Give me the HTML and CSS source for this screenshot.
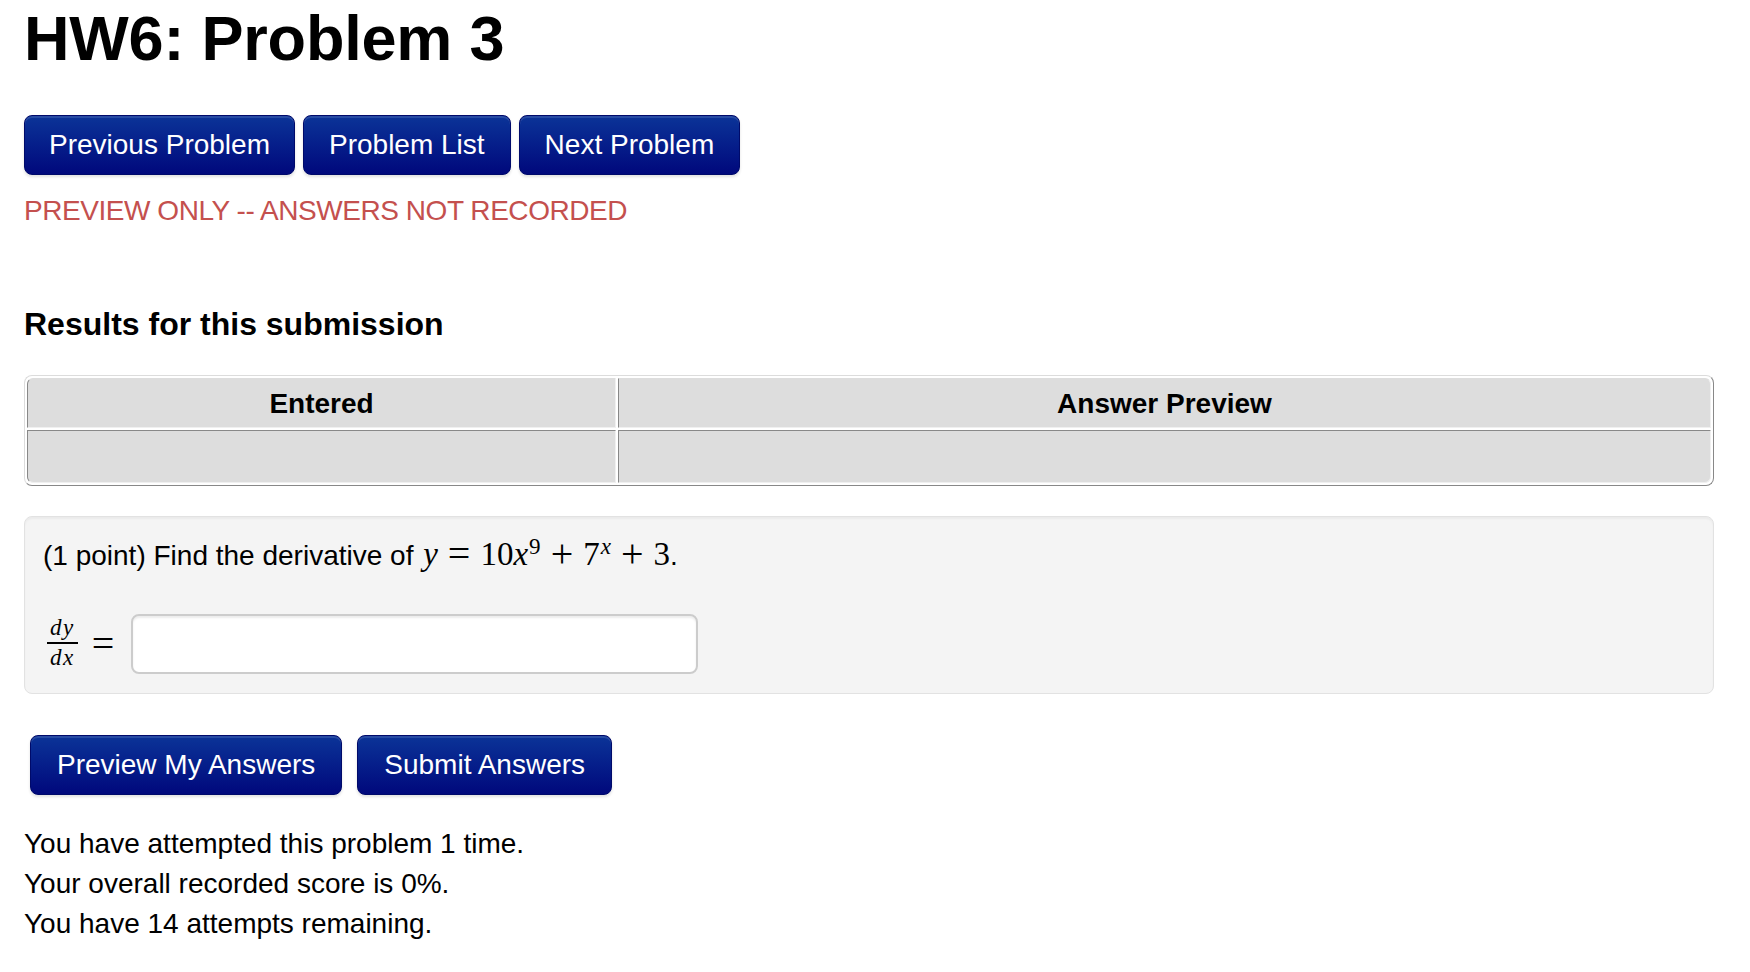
FILE: index.html
```html
<!DOCTYPE html>
<html lang="en">
<head>
<meta charset="utf-8">
<title>HW6: Problem 3</title>
<link rel="stylesheet" href="styles.css">
</head>
<body>
<div class="page">
  <h2 class="title">HW6: Problem 3</h2>
  <div class="nav">
    <a class="btn" href="#">Previous Problem</a>
    <a class="btn" href="#">Problem List</a>
    <a class="btn" href="#">Next Problem</a>
  </div>
  <div class="preview-note">PREVIEW ONLY -- ANSWERS NOT RECORDED</div>
  <h3 class="results-title">Results for this submission</h3>
  <table class="attempt">
    <tr><th class="col1">Entered</th><th class="col2">Answer Preview</th></tr>
    <tr><td class="col1"></td><td class="col2"></td></tr>
  </table>
  <div class="well">
    <p class="problem">(1 point) Find the derivative of <span class="math"><i>y</i><span class="op">=</span>10<i>x</i><sup>9</sup><span class="op">+</span>7<sup><i>x</i></sup><span class="op">+</span>3</span>.</p>
    <div class="answer-row">
      <span class="frac"><span class="num">dy</span><span class="den">dx</span></span>
      <span class="eq">=</span>
      <input class="answer" type="text" aria-label="answer">
    </div>
  </div>
  <div class="submit-row">
    <button class="btn" type="button">Preview My Answers</button>
    <button class="btn" type="button">Submit Answers</button>
  </div>
  <div class="status">
    <div>You have attempted this problem 1 time.</div>
    <div>Your overall recorded score is 0%.</div>
    <div>You have 14 attempts remaining.</div>
  </div>
</div>
</body>
</html>
```
FILE: styles.css
```css
html, body {
  margin: 0;
  padding: 0;
  background: #ffffff;
}

body {
  font-family: "Liberation Sans", Arial, Helvetica, sans-serif;
  font-size: 28px;
  line-height: 40px;
  color: #000000;
}

.page {
  padding: 0 36px 40px 24px;
}

.title {
  margin: 4px 0 0;
  font-size: 63px;
  line-height: 69px;
  font-weight: 700;
  letter-spacing: -0.2px;
}

.nav {
  display: flex;
  gap: 8px;
  margin-top: 42px;
}

.btn {
  display: inline-block;
  box-sizing: border-box;
  height: 60px;
  padding: 9px 26px;
  font-family: "Liberation Sans", Arial, Helvetica, sans-serif;
  font-size: 28px;
  line-height: 40px;
  color: #ffffff;
  text-decoration: none;
  background: linear-gradient(to bottom, #0b3498 0%, #00087c 100%);
  border: 1px solid #000a6a;
  border-radius: 8px;
  box-shadow: inset 0 2px 0 rgba(255, 255, 255, 0.12), 0 2px 3px rgba(0, 0, 0, 0.12);
  white-space: nowrap;
  cursor: pointer;
}

.nav .btn {
  padding: 9px 25px;
}

.nav .btn:first-child {
  padding: 9px 24px;
}

.preview-note {
  margin-top: 16px;
  color: #c4504e;
  letter-spacing: -0.45px;
}

.results-title {
  margin: 73px 0 0;
  font-size: 32px;
  line-height: 40px;
  font-weight: 700;
}

.attempt {
  margin-top: 31px;
  width: 1690px;
  table-layout: fixed;
  border-collapse: separate;
  border-spacing: 2px;
  border: 1px solid;
  border-color: #dcdcdc #888888 #888888 #dcdcdc;
  border-radius: 8px;
}

.attempt th,
.attempt td {
  box-sizing: border-box;
  padding: 0 6px;
  background: #dddddd;
  border: 1px solid;
  border-color: #888888 #f0f0f0 #f0f0f0 #888888;
  text-align: center;
  vertical-align: middle;
}

.attempt th {
  height: 50px;
  font-weight: 700;
  border-top-color: #dddddd;
  padding-top: 2px;
}

.attempt td {
  height: 53px;
}

.attempt .col1 {
  width: 589px;
}

.attempt tr:first-child th:first-child { border-top-left-radius: 6px; }
.attempt tr:first-child th:last-child { border-top-right-radius: 6px; }
.attempt tr:last-child td:first-child { border-bottom-left-radius: 6px; }
.attempt tr:last-child td:last-child { border-bottom-right-radius: 6px; }

.well {
  margin-top: 30px;
  padding: 17px 18px 19px;
  background: #f4f4f4;
  border: 1px solid #e2e2e2;
  border-radius: 8px;
  box-shadow: inset 0 2px 2px rgba(0, 0, 0, 0.04);
}

.problem {
  margin: 0;
  line-height: 40px;
}

.math {
  font-family: "Liberation Serif", "Times New Roman", serif;
  font-size: 33px;
  line-height: 40px;
  margin-left: 2px;
}

.math i {
  font-style: italic;
}

.math sup {
  font-size: 0.7em;
  line-height: 0;
  vertical-align: 0.48em;
  margin-left: 1px;
}

.math .op {
  font-size: 40px;
  line-height: 0;
  vertical-align: -2px;
  margin: 0 10px;
}

.answer-row {
  display: flex;
  align-items: center;
  margin-top: 38px;
  height: 60px;
}

.frac {
  display: inline-flex;
  flex-direction: column;
  align-items: center;
  font-family: "Liberation Serif", "Times New Roman", serif;
  font-style: italic;
  font-size: 23px;
  line-height: 26px;
  margin-left: 4px;
  margin-top: -2px;
}

.frac .num {
  padding: 0 3px 1px;
  border-bottom: 2px solid #000000;
  letter-spacing: 1.5px;
}

.frac .den {
  padding: 1px 3px 0;
  letter-spacing: 1.5px;
}

.eq {
  font-family: "Liberation Serif", "Times New Roman", serif;
  font-size: 40px;
  line-height: 40px;
  margin: 0 17px 0 14px;
}

.answer {
  box-sizing: border-box;
  width: 567px;
  height: 60px;
  margin: 0;
  padding: 8px 12px;
  font-family: "Liberation Sans", Arial, sans-serif;
  font-size: 28px;
  background: #ffffff;
  border: 2px solid #cccccc;
  border-radius: 8px;
  box-shadow: inset 0 2px 2px rgba(0, 0, 0, 0.075);
  outline: none;
}

.submit-row {
  display: flex;
  gap: 15px;
  margin-top: 41px;
  margin-left: 6px;
}

.status {
  margin-top: 29px;
}
```
